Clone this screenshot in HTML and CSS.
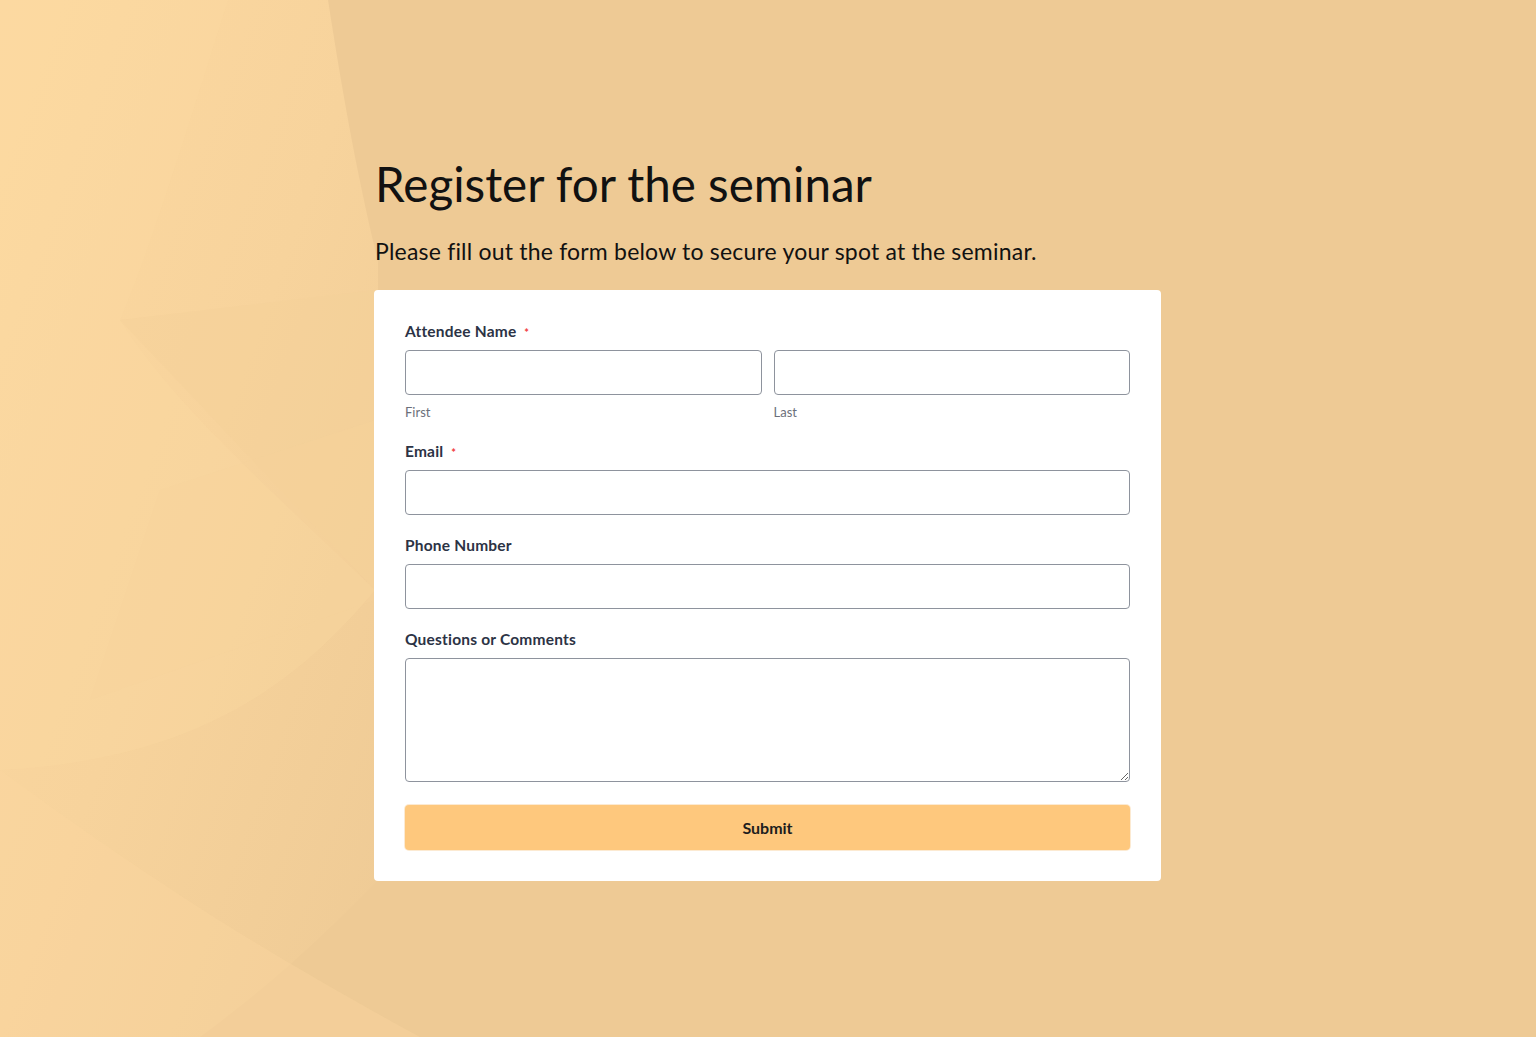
FILE: index.html
```html
<!DOCTYPE html>
<html lang="en">
<head>
<meta charset="utf-8">
<title>Register for the seminar</title>
<link rel="stylesheet" href="styles.css">
</head>
<body>
<svg class="bg" viewBox="0 0 1536 1037" preserveAspectRatio="none" aria-hidden="true">
  <defs>
    <linearGradient id="lg" x1="0" y1="0" x2="1" y2="1" gradientUnits="objectBoundingBox">
      <stop offset="0" stop-color="#fdd9a1"/>
      <stop offset="0.5" stop-color="#f7d39c"/>
      <stop offset="1" stop-color="#eeca95"/>
    </linearGradient>
  </defs>
  <rect width="1536" height="1037" fill="#eeca95"/>
  <path d="M0 0 H328 C342 90 356 170 378 262 L378 880 C300 960 250 1000 200 1037 H0 Z" fill="url(#lg)"/>
  <path d="M0 0 H228 C190 120 150 250 120 320 C170 400 260 480 375 590 C300 680 200 760 0 770 Z" fill="#fdd9a1" opacity="0.3"/>
  <path d="M120 320 L375 290 L375 590 Z" fill="#f4d09a" opacity="0.45"/>
  <path d="M0 770 C150 880 260 950 420 1037 H0 Z" fill="#fbd7a0" opacity="0.35"/>
  <path d="M160 490 L375 420 L375 600 L90 700 Z" fill="#f8d49d" opacity="0.25"/>
</svg>
<main class="page">
  <h1 class="title">Register for the seminar</h1>
  <p class="subtitle">Please fill out the form below to secure your spot at the seminar.</p>
  <form class="card">
    <div class="field field-name">
      <label class="label">Attendee Name <span class="req">*</span></label>
      <div class="name-row">
        <div class="name-col">
          <input class="input" type="text">
          <span class="sublabel">First</span>
        </div>
        <div class="name-col">
          <input class="input" type="text">
          <span class="sublabel">Last</span>
        </div>
      </div>
    </div>
    <div class="field">
      <label class="label">Email <span class="req">*</span></label>
      <input class="input" type="email">
    </div>
    <div class="field">
      <label class="label">Phone Number</label>
      <input class="input" type="tel">
    </div>
    <div class="field">
      <label class="label">Questions or Comments</label>
      <textarea class="input textarea"></textarea>
    </div>
    <button class="submit" type="button">Submit</button>
  </form>
</main>
</body>
</html>
```
FILE: styles.css
```css
* { box-sizing: border-box; }
html, body { margin: 0; padding: 0; }
body {
  min-height: 1037px;
  background: #eeca95;
  font-family: Lato, "Noto Sans", sans-serif;
  color: #111;
  position: relative;
  overflow: hidden;
}
.bg {
  position: absolute;
  left: 0; top: 0;
  width: 1536px; height: 1037px;
  z-index: 0;
}
.page {
  position: relative;
  z-index: 1;
  width: 787px;
  margin: 0 0 0 374px;
  padding-top: 152px;
}
.title {
  margin: 0 0 0 1px;
  font-weight: 400;
  font-size: 47.6px;
  line-height: 64px;
  letter-spacing: 0;
  color: #111;
}
.subtitle {
  margin: 20px 0 0 1px;
  font-size: 23px;
  line-height: 30px;
  color: #111;
  letter-spacing: 0.2px;
}
.card {
  margin-top: 24px;
  background: #fff;
  border-radius: 4px;
  padding: 31px;
  display: flex;
  flex-direction: column;
}
.field {
  display: flex;
  flex-direction: column;
  margin-bottom: 20px;
}
.field-name { margin-bottom: 21px; }
.label {
  display: block;
  height: 20px;
  font-size: 15.5px;
  font-weight: 700;
  line-height: 20px;
  letter-spacing: 0.2px;
  color: #2c3345;
  margin-bottom: 9px;
  overflow: visible;
}
.req {
  color: #f23a3c;
  font-size: 11px;
  line-height: 1;
  margin-left: 4px;
}
.name-row {
  display: flex;
  gap: 12px;
}
.name-col {
  flex: 1;
  display: flex;
  flex-direction: column;
}
.input {
  display: block;
  width: 100%;
  height: 45px;
  border: 1px solid #8e939d;
  border-radius: 4px;
  background: #fff;
  font: inherit;
  margin: 0;
}
.textarea {
  height: 124px;
  resize: vertical;
}
.sublabel {
  display: block;
  margin-top: 9px;
  height: 16px;
  font-size: 13px;
  line-height: 16px;
  color: #6b6f7a;
}
.submit {
  margin: 3px 0 0 0;
  height: 45px;
  width: 100%;
  border: none;
  border-radius: 4px;
  background: #fec87d;
  font-family: Lato, "Noto Sans", sans-serif;
  font-weight: 700;
  font-size: 16px;
  color: #1d1d1d;
  box-shadow: 0 0 0 1px rgba(250, 220, 180, 0.6);
}
```
